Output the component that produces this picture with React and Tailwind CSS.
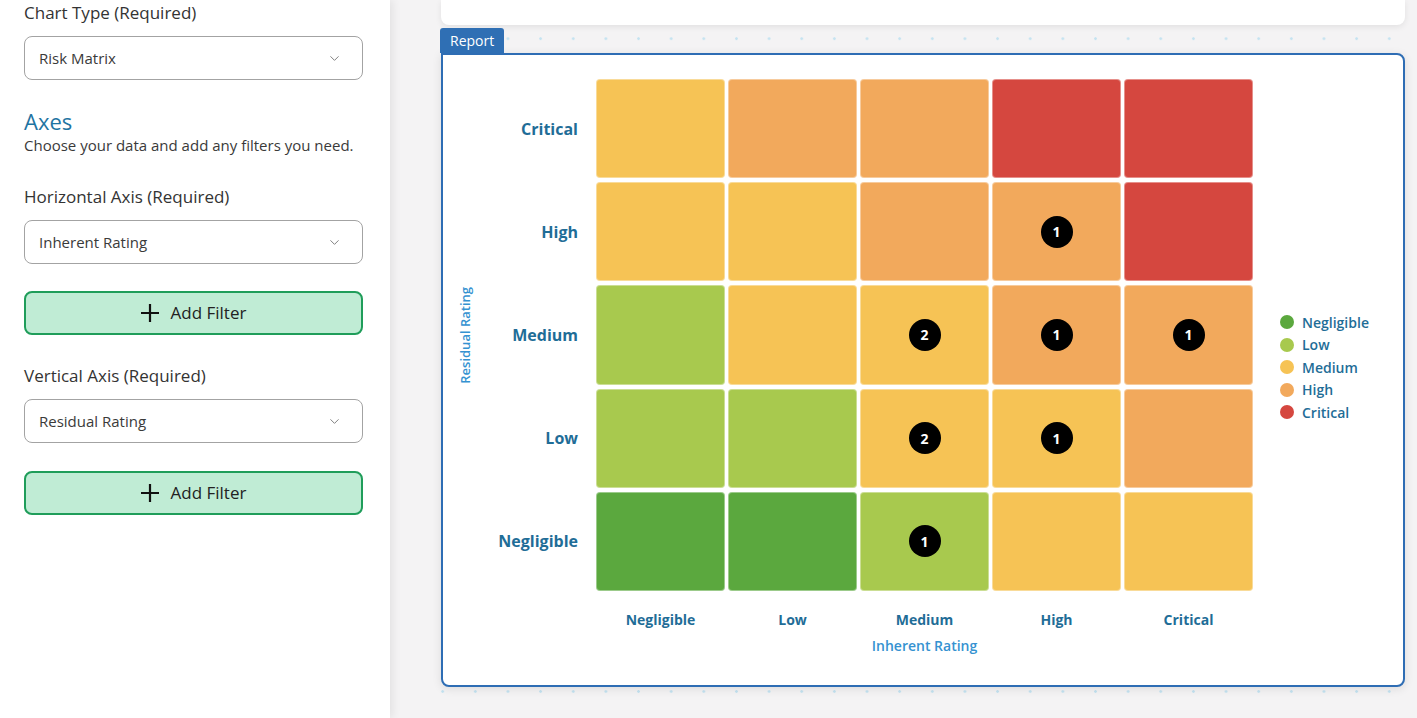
import React from 'react'
import { ChevronDown } from 'lucide-react'

const FILL = {
  G: 'bg-[#5ba83e]',
  LG: 'bg-[#a8c94e]',
  Y: 'bg-[#f6c355]',
  O: 'bg-[#f2a95c]',
  R: 'bg-[#d5473f]',
}

const LEVELS = ['Negligible', 'Low', 'Medium', 'High', 'Critical']

// rows from top (Critical) to bottom (Negligible)
const MATRIX = [
  [['Y'], ['O'], ['O'], ['R'], ['R']],
  [['Y'], ['Y'], ['O'], ['O', 1], ['R']],
  [['LG'], ['Y'], ['Y', 2], ['O', 1], ['O', 1]],
  [['LG'], ['LG'], ['Y', 2], ['Y', 1], ['O']],
  [['G'], ['G'], ['LG', 1], ['Y'], ['Y']],
]

const LEGEND = [
  ['Negligible', 'bg-[#5ba83e]'],
  ['Low', 'bg-[#a8c94e]'],
  ['Medium', 'bg-[#f6c355]'],
  ['High', 'bg-[#f2a95c]'],
  ['Critical', 'bg-[#d5473f]'],
]

const Select = ({ value }) => (
  <div className="h-[44px] rounded-lg border border-[#a3a3a3] bg-white flex items-center justify-between pl-[14px] pr-[20px]">
    <span className="text-[15px] text-[#3a3a3a]">{value}</span>
    <ChevronDown size={15} strokeWidth={1.5} className="text-[#777]" />
  </div>
)

const AddFilter = () => (
  <button className="w-full h-[44px] rounded-lg border-2 border-[#1f9d5a] bg-[#c0ecd5] flex items-center justify-center gap-[12px] text-[17px] text-[#222]">
    <svg width="18" height="18" viewBox="0 0 18 18" fill="none" stroke="#111" strokeWidth="2.2">
      <path d="M9 0v18M0 9h18" />
    </svg>
    <span>Add Filter</span>
  </button>
)

const Sidebar = () => (
  <aside className="w-[390px] shrink-0 bg-white pl-[24px] pr-[27px] pt-[1px] shadow-[3px_0_8px_rgba(0,0,0,0.07)] z-10 relative">
    <div className="text-[17px] leading-[24px] text-[#333]">Chart Type (Required)</div>
    <div className="mt-[11px]">
      <Select value="Risk Matrix" />
    </div>

    <h2 className="mt-[27px] text-[22px] leading-[28px] text-[#1f74a2]">Axes</h2>
    <p className="text-[15px] leading-[20px] text-[#3a3a3a] whitespace-nowrap">Choose your data and add any filters you need.</p>

    <div className="mt-[30px] text-[17px] leading-[24px] text-[#333]">Horizontal Axis (Required)</div>
    <div className="mt-[11px]">
      <Select value="Inherent Rating" />
    </div>
    <div className="mt-[27px]">
      <AddFilter />
    </div>

    <div className="mt-[29px] text-[17px] leading-[24px] text-[#333]">Vertical Axis (Required)</div>
    <div className="mt-[11px]">
      <Select value="Residual Rating" />
    </div>
    <div className="mt-[28px]">
      <AddFilter />
    </div>
  </aside>
)

const RiskMatrix = () => (
  <div className="flex pt-[24px]">
    {/* y axis title */}
    <div className="w-[46px] h-[512px] flex items-center justify-center">
      <span className="[writing-mode:vertical-rl] rotate-180 text-[13px] font-semibold text-[#3592d1] whitespace-nowrap">
        Residual Rating
      </span>
    </div>

    {/* row labels */}
    <div className="w-[89px] h-[512px] grid grid-rows-5 gap-y-[4px]">
      {[...LEVELS].reverse().map((l) => (
        <div key={l} className="flex items-center justify-end text-[16px] font-bold text-[#1f6d97]">
          {l}
        </div>
      ))}
    </div>

    <div className="ml-[18px] w-[657px]">
      <div className="h-[512px] grid grid-cols-5 grid-rows-5 gap-x-[3px] gap-y-[4px]">
        {MATRIX.map((row, r) =>
          row.map(([c, n], i) => (
            <div
              key={`${r}-${i}`}
              className={`${FILL[c]} rounded-[4px] border border-white/40 flex items-center justify-center`}
            >
              {n && (
                <span className="w-8 h-8 rounded-full bg-black text-white text-[14px] font-bold flex items-center justify-center">
                  {n}
                </span>
              )}
            </div>
          ))
        )}
      </div>
      <div className="mt-[19px] grid grid-cols-5 gap-x-[3px]">
        {LEVELS.map((l) => (
          <div key={l} className="text-center text-[14px] leading-[20px] font-bold text-[#1f6d97]">
            {l}
          </div>
        ))}
      </div>
      <div className="mt-[6px] text-center text-[14px] leading-[20px] font-semibold text-[#3592d1]">
        Inherent Rating
      </div>
    </div>

    {/* legend */}
    <div className="ml-[27px] mt-[232px] flex flex-col">
      {LEGEND.map(([l, c]) => (
        <div key={l} className="h-[22.5px] flex items-center gap-[8px]">
          <span className={`w-[14px] h-[14px] rounded-full ${c}`} />
          <span className="text-[14px] font-semibold text-[#1f6d97]">{l}</span>
        </div>
      ))}
    </div>
  </div>
)

export default function App() {
  return (
    <div className="w-[1417px] h-[718px] overflow-hidden flex font-['Open_Sans','Noto_Sans',sans-serif] bg-[#f4f3f4]">
      <Sidebar />
      <main className="flex-1 pl-[51px] pr-[12px]">
        <div className="bg-[radial-gradient(circle,#c4e3f1_1px,transparent_1.6px)] bg-[length:32.65px_32.65px] bg-[position:18px_-10.3px] pb-[40px]">
          <div className="h-[25px] bg-white rounded-b-lg shadow-[0_2px_6px_rgba(0,0,0,0.08)]" />
          <div className="mt-[3px]">
            <div className="inline-flex h-[25px] items-center px-[10px] bg-[#2f6fb4] rounded-t-[3px] text-white text-[14px] -ml-[1px]">
              Report
            </div>
            <div className="h-[634px] bg-white border-2 border-[#2e6db4] rounded-lg rounded-tl-none shadow-[0_2px_10px_rgba(0,0,0,0.1)]">
              <RiskMatrix />
            </div>
          </div>
        </div>
      </main>
    </div>
  )
}
